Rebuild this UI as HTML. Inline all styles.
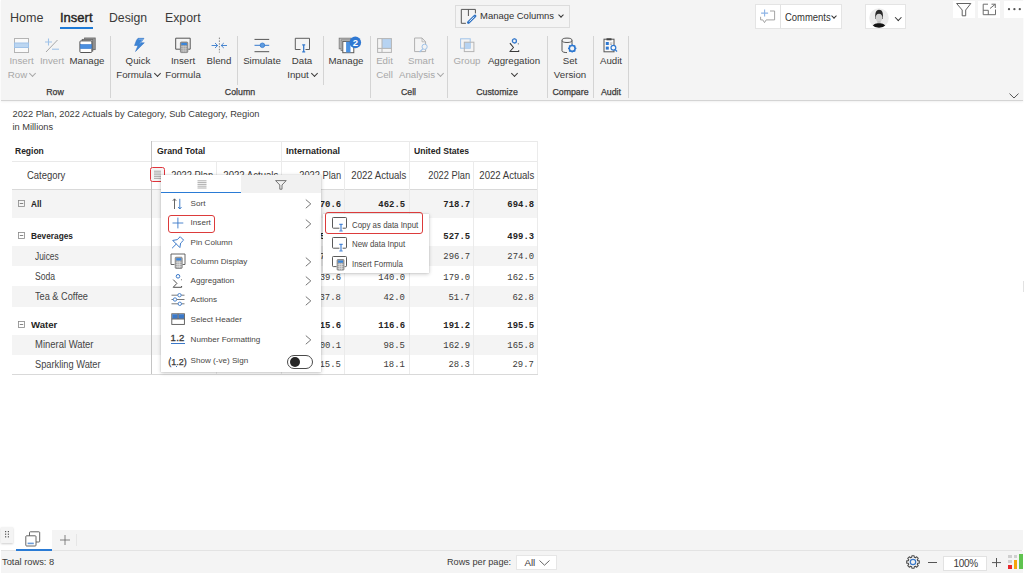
<!DOCTYPE html>
<html><head><meta charset="utf-8">
<style>
*{box-sizing:border-box;margin:0;padding:0}
html,body{width:1024px;height:573px;overflow:hidden;background:#fff;font-family:"Liberation Sans",sans-serif;color:#323130;position:relative}
.a{position:absolute}
.rib{left:1px;top:0;width:1022px;height:101px;background:#f4f4f4;border-bottom:1px solid #d4d4d4;box-shadow:0 1px 2px rgba(0,0,0,0.06)}
.tab{top:9.5px;font-size:13px;color:#3b3a39;white-space:nowrap}
.sb{-webkit-text-stroke:0.4px currentColor}
.sep{width:1px;background:#d4d4d4}
.lbl{font-size:9.7px;color:#3b3a39;white-space:nowrap;text-align:center;line-height:14.4px}
.dis{color:#a8a8a8}
.glb{font-size:8.8px;-webkit-text-stroke:0.25px #3b3a39;color:#3b3a39;white-space:nowrap;text-align:center;top:86.8px}
svg{display:block;overflow:visible}
.tt{font-size:9.3px;color:#323130;white-space:nowrap}
.cell{font-size:9.4px;white-space:nowrap}
.num{font-family:"Liberation Mono",monospace;font-size:8.6px;text-align:right;white-space:nowrap}
.mi{font-size:8px;color:#3b3a39;white-space:nowrap}
.chev{display:inline-block;width:5px;height:5px;border-right:1px solid currentColor;border-bottom:1px solid currentColor;transform:rotate(45deg);margin-left:3px;vertical-align:2px}
</style></head><body>

<div class="a rib"></div>
<!-- tabs -->
<div class="a tab" style="left:10px"><span style="display:inline-block;transform:scaleX(0.965);transform-origin:left">Home</span></div>
<div class="a tab sb" style="left:60px;color:#252423">Insert</div>
<div class="a" style="left:60px;top:27px;width:33px;height:2px;background:#1e7ad6"></div>
<div class="a tab" style="left:109px"><span style="display:inline-block;transform:scaleX(0.941);transform-origin:left">Design</span></div>
<div class="a tab" style="left:165px"><span style="display:inline-block;transform:scaleX(0.947);transform-origin:left">Export</span></div>

<!-- ribbon separators -->
<div class="a sep" style="left:110px;top:36px;height:62px"></div>
<div class="a sep" style="left:237px;top:36px;height:49px"></div>
<div class="a sep" style="left:323px;top:36px;height:49px"></div>
<div class="a sep" style="left:370px;top:36px;height:62px"></div>
<div class="a sep" style="left:447px;top:36px;height:62px"></div>
<div class="a sep" style="left:547px;top:36px;height:62px"></div>
<div class="a sep" style="left:593px;top:36px;height:62px"></div>
<div class="a sep" style="left:628px;top:36px;height:62px"></div>

<!-- icons -->
<svg class="a" style="left:14px;top:38px" width="15" height="15" viewBox="0 0 15 15">
 <rect x="0.5" y="0.5" width="14" height="14" fill="#fafafa" stroke="#b4b4b4"/>
 <rect x="0.5" y="5" width="14" height="4.5" fill="#bcd6f1" stroke="#9fc2e8"/>
</svg>
<svg class="a" style="left:44px;top:38px" width="16" height="16" viewBox="0 0 16 16">
 <path d="M1 4H8M4.5 0.5V7.5" stroke="#9fc2e8" stroke-width="1.1" fill="none"/>
 <path d="M2 14L13.5 2" stroke="#a6a6a6" stroke-width="1" fill="none"/>
 <path d="M8 11.2H15" stroke="#9fc2e8" stroke-width="1.1" fill="none"/>
</svg>
<svg class="a" style="left:79px;top:37px" width="17" height="17" viewBox="0 0 17 17">
 <rect x="5.6" y="1" width="10.6" height="11.6" fill="#9c9c9c" stroke="#6a6a6a" stroke-width="0.9"/>
 <rect x="3.2" y="2.4" width="10.6" height="11.6" fill="#b8b8b8" stroke="#6a6a6a" stroke-width="0.9"/>
 <rect x="0.9" y="3.9" width="12" height="11.6" rx="1" fill="#fff" stroke="#555" stroke-width="1"/>
 <rect x="1.4" y="7.6" width="11" height="3.9" fill="#4a8fe0" stroke="#2f72c8" stroke-width="0.6"/>
</svg>
<svg class="a" style="left:133px;top:38px" width="12" height="14" viewBox="0 0 12 14">
 <path d="M5 0.3H11L7.8 4.8H11.3L2.5 13.5L5 7.5H1.5L3.5 2.2Z" fill="#3d85d6" stroke="#2a6cc0" stroke-width="0.5"/>
 <path d="M5.6 1.3H9.6L7 5.6" fill="none" stroke="#9ec4ee" stroke-width="0.6"/>
</svg>
<svg class="a" style="left:175px;top:37px" width="16" height="16" viewBox="0 0 16 16">
 <path d="M5 12.2H0.7V1.2H15.2V12.2H13.2" fill="none" stroke="#555" stroke-width="1"/>
 <rect x="5.4" y="5" width="7.4" height="10.6" rx="1" fill="#9a9a9a" stroke="#6e6e6e" stroke-width="0.7"/>
 <rect x="6.3" y="5.9" width="5.6" height="2.2" fill="#3a86dc"/>
 <path d="M6 9.7H12.2M6 11.8H12.2M6 13.9H12.2M8.2 8.5V15.3M10.2 8.5V15.3" stroke="#d8d8d8" stroke-width="0.6"/>
</svg>
<svg class="a" style="left:211px;top:37px" width="16" height="16" viewBox="0 0 16 16">
 <path d="M8.4 0.6V15.6" stroke="#777" stroke-width="0.9" stroke-dasharray="1.5 1.3"/>
 <path d="M0.6 8.5H6.6M4 6L6.6 8.5L4 11M16 8.5H10.2M12.8 6L10.2 8.5L12.8 11" stroke="#3579cc" stroke-width="0.9" fill="none"/>
</svg>
<svg class="a" style="left:254px;top:38px" width="16" height="15" viewBox="0 0 16 15">
 <path d="M0.5 1.4H15.2M0.5 13.7H15.2" stroke="#555" stroke-width="1"/>
 <path d="M0.5 7.3H15.2" stroke="#3579cc" stroke-width="1"/>
 <circle cx="8.4" cy="7.3" r="2.3" fill="#5d9be0" stroke="#3579cc" stroke-width="0.8"/>
</svg>
<svg class="a" style="left:294px;top:37px" width="17" height="17" viewBox="0 0 17 17">
 <path d="M6.5 12.5H1.3V1.3H15.5V12.5H11.5" fill="none" stroke="#555" stroke-width="0.95"/>
 <path d="M9.7 7.6V14.8M8.2 7.8H11.2M8.2 14.8H11.2" stroke="#3579cc" stroke-width="1.3" fill="none"/>
</svg>
<svg class="a" style="left:338px;top:37px" width="24" height="17" viewBox="0 0 24 17">
 <rect x="1.2" y="1.2" width="12" height="10.6" fill="#cfcfcf" stroke="#7a7a7a" stroke-width="0.9"/>
 <rect x="3.1" y="2.9" width="12" height="10.6" fill="#d8d8d8" stroke="#7a7a7a" stroke-width="0.9"/>
 <rect x="4.8" y="4.4" width="11" height="11.3" fill="#fff" stroke="#5a5a5a" stroke-width="1"/>
 <rect x="8.1" y="4.8" width="4.4" height="10.6" fill="#4b92e2"/>
 <circle cx="17.3" cy="5.4" r="5.8" fill="#2f78d2"/>
 <text x="17.4" y="9.1" font-size="9.6" font-weight="bold" fill="#fff" text-anchor="middle" font-family="Liberation Sans">2</text>
</svg>
<svg class="a" style="left:377px;top:38px" width="15" height="15" viewBox="0 0 15 15">
 <rect x="5" y="0.6" width="9.4" height="9.8" fill="#b6d3f2"/>
 <rect x="0.6" y="0.6" width="13.8" height="13.8" fill="none" stroke="#b4b4b4" stroke-width="1"/>
 <path d="M5 0.6V14.4M0.6 10.4H14.4" stroke="#b4b4b4" stroke-width="1"/>
</svg>
<svg class="a" style="left:414px;top:37px" width="14" height="16" viewBox="0 0 14 16">
 <path d="M0.6 1H8L11.6 4.8V14.6H0.6Z" fill="none" stroke="#b0b0b0" stroke-width="1"/>
 <path d="M8 1V4.8H11.6" fill="none" stroke="#b0b0b0" stroke-width="0.8"/>
 <circle cx="10.6" cy="9.8" r="2.6" fill="#f3f3f3" stroke="#9fc2e8" stroke-width="1"/>
 <path d="M8.8 11.8L5.6 15" stroke="#9fc2e8" stroke-width="1.1"/>
</svg>
<svg class="a" style="left:460px;top:38px" width="15" height="15" viewBox="0 0 15 15">
 <rect x="0.6" y="0.8" width="9.6" height="9.4" fill="none" stroke="#9fc2e8" stroke-width="1"/>
 <rect x="4.3" y="4.2" width="5.9" height="6" fill="#b6d3f2"/>
 <rect x="4.3" y="4.2" width="9.6" height="9.4" fill="none" stroke="#b4b4b4" stroke-width="1"/>
</svg>
<svg class="a" style="left:508px;top:37px" width="13" height="17" viewBox="0 0 13 17">
 <circle cx="6.4" cy="3.9" r="2" fill="none" stroke="#3579cc" stroke-width="1.3"/>
 <path d="M6.4 1V1.6M6.4 6.2V6.8" stroke="#3579cc" stroke-width="0.8"/>
 <path d="M1.9 6.2L5.5 10.5L1.9 14.5H10.7V13.2" fill="none" stroke="#3a3a3a" stroke-width="1.1" stroke-linejoin="round"/>
 <circle cx="10.3" cy="6.8" r="0.6" fill="#555"/>
</svg>
<svg class="a" style="left:561px;top:37px" width="16" height="17" viewBox="0 0 16 17">
 <path d="M1 3.5V13.8C1 15 3.5 15.6 6 15.6" fill="none" stroke="#555" stroke-width="1"/>
 <path d="M11 3.5V7.5" fill="none" stroke="#555" stroke-width="1"/>
 <ellipse cx="6" cy="3.3" rx="5" ry="2.2" fill="none" stroke="#555" stroke-width="1"/>
 <circle cx="11.2" cy="11.4" r="2.9" fill="none" stroke="#2e78d0" stroke-width="1.6"/>
 <path d="M11.2 7.2V8.4M11.2 14.4V15.6M7 11.4H8.2M14.2 11.4H15.4M8.2 8.4L9 9.2M13.4 13.6L14.2 14.4M14.2 8.4L13.4 9.2M9 13.6L8.2 14.4" stroke="#2e78d0" stroke-width="1.4"/>
</svg>
<svg class="a" style="left:603px;top:38px" width="15" height="15" viewBox="0 0 15 15">
 <rect x="1" y="1.2" width="10" height="12.6" fill="#fafafa" stroke="#555" stroke-width="1"/>
 <rect x="3.5" y="0.3" width="5" height="2" fill="#444"/>
 <rect x="2.8" y="4" width="3" height="3" fill="#2e78d0"/>
 <rect x="2.8" y="8.6" width="3" height="3" fill="#2e78d0"/>
 <path d="M6.8 5H9.5M6.8 6.4H9" stroke="#888" stroke-width="0.6"/>
 <circle cx="10.4" cy="9.8" r="2.4" fill="#fafafa" stroke="#2e78d0" stroke-width="1.2"/>
 <path d="M12.2 11.6L14 13.5" stroke="#2e78d0" stroke-width="1.3"/>
</svg>

<!-- labels -->
<div class="a lbl dis" style="left:0;width:43px;top:54px">Insert<br>Row<span class="chev"></span></div>
<div class="a lbl dis" style="left:37px;width:30px;top:54px">Invert</div>
<div class="a lbl" style="left:67px;width:40px;top:54px">Manage</div>
<div class="a lbl" style="left:115px;width:46px;top:54px">Quick<br>Formula<span class="chev"></span></div>
<div class="a lbl" style="left:161px;width:44px;top:54px">Insert<br>Formula</div>
<div class="a lbl" style="left:202px;width:34px;top:54px">Blend</div>
<div class="a lbl" style="left:239px;width:46px;top:54px">Simulate</div>
<div class="a lbl" style="left:284px;width:36px;top:54px">Data<br>Input<span class="chev"></span></div>
<div class="a lbl" style="left:326px;width:40px;top:54px">Manage</div>
<div class="a lbl dis" style="left:372px;width:25px;top:54px">Edit<br>Cell</div>
<div class="a lbl dis" style="left:397px;width:48px;top:54px">Smart<br>Analysis<span class="chev"></span></div>
<div class="a lbl dis" style="left:450px;width:34px;top:54px">Group</div>
<div class="a lbl" style="left:484px;width:60px;top:54px">Aggregation<br><span class="chev" style="margin-left:0"></span></div>
<div class="a lbl" style="left:548px;width:44px;top:54px">Set<br>Version</div>
<div class="a lbl" style="left:595px;width:32px;top:54px">Audit</div>

<div class="a glb" style="left:0;width:110px">Row</div>
<div class="a glb" style="left:110px;width:260px">Column</div>
<div class="a glb" style="left:370px;width:77px">Cell</div>
<div class="a glb" style="left:447px;width:100px">Customize</div>
<div class="a glb" style="left:547px;width:47px">Compare</div>
<div class="a glb" style="left:594px;width:34px">Audit</div>

<!-- top widgets -->
<div class="a" style="left:455px;top:5px;width:114.5px;height:22.5px;border:1px solid #dcdcdc;background:#f4f4f4"></div>
<svg class="a" style="left:460px;top:8px" width="17" height="17" viewBox="0 0 17 17">
 <path d="M1.3 15.3V1.4H15.4V5.4M8.4 1.4V8M1.3 15.3H5.9" fill="none" stroke="#555" stroke-width="1"/>
 <path d="M8.4 14.5L15 7.9" stroke="#2e72c4" stroke-width="2.8" stroke-linecap="round"/>
 <path d="M9.2 13.7L14.2 8.7" stroke="#fff" stroke-width="0.9"/>
</svg>
<div class="a tt" style="left:479.6px;top:10.3px;font-size:9.8px;color:#323130"><span style="display:inline-block;transform:scaleX(0.965);transform-origin:left">Manage Columns</span></div>
<span class="a chev" style="left:558.5px;top:13px;width:4px;height:4px;border-width:0 1.3px 1.3px 0;color:#333;margin:0"></span>

<div class="a" style="left:755px;top:4px;width:87px;height:25px;border:1px solid #e4e4e4;background:#fff"></div>
<div class="a" style="left:779.5px;top:5px;width:1px;height:23px;background:#e2e2e2"></div>
<svg class="a" style="left:759px;top:8px" width="18" height="17" viewBox="0 0 18 17">
 <path d="M11 3H15.6V11.9H7.2L5.5 14.6L3.8 11.9H1.6V8.8" fill="none" stroke="#9a9a9a" stroke-width="0.9" stroke-linejoin="round"/>
 <path d="M5.6 1.5V8.6M2.1 5.1H9.1" stroke="#8db4e6" stroke-width="1.1"/>
</svg>
<div class="a tt" style="left:784.5px;top:10.8px;font-size:10.5px;line-height:12px"><span style="display:inline-block;transform:scaleX(0.9);transform-origin:left">Comments</span></div>
<span class="a chev" style="left:831.5px;top:14px;width:4px;height:4px;border-width:0 1.3px 1.3px 0;color:#333;margin:0"></span>

<div class="a" style="left:865px;top:4px;width:41px;height:25px;border:1px solid #e4e4e4;background:#fff"></div>
<svg class="a" style="left:869px;top:8px" width="20" height="20" viewBox="0 0 20 20">
 <defs><clipPath id="cav"><circle cx="10" cy="10" r="9.8"/></clipPath></defs>
 <circle cx="10" cy="10" r="9.8" fill="#ececec"/>
 <g clip-path="url(#cav)">
  <path d="M6.5 11C5.6 6 6.8 1.8 10 1.8S14.6 5 13.6 11Z" fill="#2a2a2a"/>
  <ellipse cx="10" cy="9.6" rx="3.3" ry="4.4" fill="#d2d2d2"/>
  <path d="M6.8 8C7.4 4.6 8.6 4 10.2 4S12.8 4.6 13.3 8C12.4 6.4 11.4 5.8 10 5.8S7.6 6.4 6.8 8Z" fill="#2a2a2a"/>
  <path d="M8.4 13H11.6V15.6H8.4Z" fill="#c4c4c4"/>
  <path d="M2.5 21C3 16.6 6 15.2 10 15.2S17 16.6 17.5 21Z" fill="#141414"/>
 </g>
</svg>
<span class="a chev" style="left:895.5px;top:15px;width:4.5px;height:4.5px;border-width:0 1.3px 1.3px 0;color:#333;margin:0"></span>

<div class="a" style="left:953px;top:1px;width:22px;height:17px;background:#fff"></div>
<svg class="a" style="left:955px;top:2px" width="18" height="16" viewBox="0 0 18 16">
 <path d="M1.6 1.5H15.8L10.7 8V13.8H7.2V8Z" fill="none" stroke="#5a5a5a" stroke-width="0.95" stroke-linejoin="round"/>
</svg>
<div class="a" style="left:978.2px;top:1px;width:21.6px;height:17px;background:#fff"></div>
<svg class="a" style="left:981px;top:2px" width="17" height="15" viewBox="0 0 17 15">
 <path d="M7 2.2H2.2V12.7H14.5V7.5" fill="none" stroke="#666" stroke-width="0.95"/>
 <path d="M2.2 8.3H7.3V12.7" fill="none" stroke="#666" stroke-width="0.95"/>
 <path d="M9 6.5L14.3 2.2M10.5 2.2H14.3V6" fill="none" stroke="#666" stroke-width="0.95"/>
</svg>
<div class="a" style="left:1004px;top:1px;width:20px;height:17px;background:#fff"></div>
<svg class="a" style="left:1005px;top:6.5px" width="19" height="4" viewBox="0 0 19 4">
 <circle cx="4" cy="2.2" r="1.15" fill="#555"/><circle cx="9.4" cy="2.2" r="1.15" fill="#555"/><circle cx="14.8" cy="2.2" r="1.15" fill="#555"/>
</svg>
<svg class="a" style="left:1008.8px;top:93px" width="11" height="6" viewBox="0 0 11 6">
 <path d="M0.5 0.6L5 5L9.5 0.6" fill="none" stroke="#555" stroke-width="1"/>
</svg>



<div class="a t" style="top:109.77px;font-size:9.25px;line-height:9.25px;color:#3b3a39;font-family:'Liberation Sans',sans-serif;left:12.5px;">2022 Plan, 2022 Actuals by Category, Sub Category, Region</div>
<div class="a t" style="top:122.77px;font-size:9.25px;line-height:9.25px;color:#3b3a39;font-family:'Liberation Sans',sans-serif;left:12.5px;">in Millions</div>
<div class="a" style="left:12px;top:141.5px;width:525.5px;height:232px;background:#fff"></div>
<div class="a" style="left:12px;top:189.5px;width:525.5px;height:28.0px;background:#f4f4f4"></div>
<div class="a" style="left:12px;top:217.5px;width:525.5px;height:28.5px;background:#ffffff"></div>
<div class="a" style="left:12px;top:246px;width:525.5px;height:20px;background:#f4f4f4"></div>
<div class="a" style="left:12px;top:266px;width:525.5px;height:20px;background:#ffffff"></div>
<div class="a" style="left:12px;top:286px;width:525.5px;height:20.5px;background:#f4f4f4"></div>
<div class="a" style="left:12px;top:306.5px;width:525.5px;height:28.5px;background:#ffffff"></div>
<div class="a" style="left:12px;top:335px;width:525.5px;height:20px;background:#f4f4f4"></div>
<div class="a" style="left:12px;top:355px;width:525.5px;height:18.5px;background:#ffffff"></div>
<div class="a" style="left:12px;top:161px;width:525.5px;height:1px;background:#e9e9e9"></div>
<div class="a" style="left:12px;top:188.5px;width:525.5px;height:1.5px;background:#d9d9d9"></div>
<div class="a" style="left:152px;top:141px;width:385.5px;height:1px;background:#e9e9e9"></div>
<div class="a" style="left:12px;top:373.5px;width:525.5px;height:1px;background:#d9d9d9"></div>
<div class="a" style="left:151px;top:141px;width:1px;height:233px;background:#c4c4c4"></div>
<div class="a" style="left:280.5px;top:141px;width:1px;height:233px;background:#ebebeb"></div>
<div class="a" style="left:408.5px;top:141px;width:1px;height:233px;background:#ebebeb"></div>
<div class="a" style="left:216.0px;top:161px;width:1px;height:213px;background:#ebebeb"></div>
<div class="a" style="left:344.0px;top:161px;width:1px;height:213px;background:#ebebeb"></div>
<div class="a" style="left:472.9px;top:161px;width:1px;height:213px;background:#ebebeb"></div>
<div class="a" style="left:536.9px;top:141px;width:1px;height:233px;background:#ebebeb"></div>
<div class="a t" style="top:147.40px;font-size:9.1px;line-height:9.1px;color:#252423;font-family:'Liberation Sans',sans-serif;font-weight:bold;left:15.3px;"><span style="display:inline-block;transform:scaleX(0.934);transform-origin:left">Region</span></div>
<div class="a t" style="top:147.40px;font-size:9.1px;line-height:9.1px;color:#252423;font-family:'Liberation Sans',sans-serif;font-weight:bold;left:156.8px;"><span style="display:inline-block;transform:scaleX(0.958);transform-origin:left">Grand Total</span></div>
<div class="a t" style="top:147.40px;font-size:9.1px;line-height:9.1px;color:#252423;font-family:'Liberation Sans',sans-serif;font-weight:bold;left:285.7px;"><span style="display:inline-block;transform:scaleX(0.990);transform-origin:left">International</span></div>
<div class="a t" style="top:147.40px;font-size:9.1px;line-height:9.1px;color:#252423;font-family:'Liberation Sans',sans-serif;font-weight:bold;left:414.2px;"><span style="display:inline-block;transform:scaleX(0.946);transform-origin:left">United States</span></div>
<div class="a t" style="top:171.03px;font-size:10px;line-height:10px;color:#3b3a39;font-family:'Liberation Sans',sans-serif;left:27px;"><span style="display:inline-block;transform:scaleX(0.944);transform-origin:left">Category</span></div>
<div class="a t" style="top:171.03px;font-size:10px;line-height:10px;color:#3b3a39;font-family:'Liberation Sans',sans-serif;left:143.5px;width:70px;text-align:right;"><span style="display:inline-block;transform:scaleX(0.928);transform-origin:right">2022 Plan</span></div>
<div class="a t" style="top:171.03px;font-size:10px;line-height:10px;color:#3b3a39;font-family:'Liberation Sans',sans-serif;left:208px;width:70px;text-align:right;"><span style="display:inline-block;transform:scaleX(0.960);transform-origin:right">2022 Actuals</span></div>
<div class="a t" style="top:171.03px;font-size:10px;line-height:10px;color:#3b3a39;font-family:'Liberation Sans',sans-serif;left:271.5px;width:70px;text-align:right;"><span style="display:inline-block;transform:scaleX(0.928);transform-origin:right">2022 Plan</span></div>
<div class="a t" style="top:171.03px;font-size:10px;line-height:10px;color:#3b3a39;font-family:'Liberation Sans',sans-serif;left:336px;width:70px;text-align:right;"><span style="display:inline-block;transform:scaleX(0.960);transform-origin:right">2022 Actuals</span></div>
<div class="a t" style="top:171.03px;font-size:10px;line-height:10px;color:#3b3a39;font-family:'Liberation Sans',sans-serif;left:400.4px;width:70px;text-align:right;"><span style="display:inline-block;transform:scaleX(0.928);transform-origin:right">2022 Plan</span></div>
<div class="a t" style="top:171.03px;font-size:10px;line-height:10px;color:#3b3a39;font-family:'Liberation Sans',sans-serif;left:464.4px;width:70px;text-align:right;"><span style="display:inline-block;transform:scaleX(0.960);transform-origin:right">2022 Actuals</span></div>
<svg class="a" style="left:18.2px;top:200.0px" width="7" height="7" viewBox="0 0 7 7"><rect x="0.5" y="0.5" width="6" height="6" fill="none" stroke="#888" stroke-width="0.8"/><path d="M1.8 3.5H5.2" stroke="#666" stroke-width="0.8"/></svg>
<div class="a t" style="top:200.18px;font-size:9.0px;line-height:9.0px;color:#252423;font-family:'Liberation Sans',sans-serif;font-weight:bold;left:30.5px;"><span style="display:inline-block;transform:scaleX(0.913);transform-origin:left">All</span></div>
<div class="a t" style="top:201.13px;font-size:8.7px;line-height:8.7px;color:#252423;font-family:'Liberation Mono',monospace;font-weight:bold;left:152.7px;width:60px;text-align:right;"><span style="display:inline-block;transform:scaleX(1.025);transform-origin:right">1189.3</span></div>
<div class="a t" style="top:201.13px;font-size:8.7px;line-height:8.7px;color:#252423;font-family:'Liberation Mono',monospace;font-weight:bold;left:217.2px;width:60px;text-align:right;"><span style="display:inline-block;transform:scaleX(1.025);transform-origin:right">1157.3</span></div>
<div class="a t" style="top:201.13px;font-size:8.7px;line-height:8.7px;color:#252423;font-family:'Liberation Mono',monospace;font-weight:bold;left:280.7px;width:60px;text-align:right;"><span style="display:inline-block;transform:scaleX(1.025);transform-origin:right">470.6</span></div>
<div class="a t" style="top:201.13px;font-size:8.7px;line-height:8.7px;color:#252423;font-family:'Liberation Mono',monospace;font-weight:bold;left:345.2px;width:60px;text-align:right;"><span style="display:inline-block;transform:scaleX(1.025);transform-origin:right">462.5</span></div>
<div class="a t" style="top:201.13px;font-size:8.7px;line-height:8.7px;color:#252423;font-family:'Liberation Mono',monospace;font-weight:bold;left:409.59999999999997px;width:60px;text-align:right;"><span style="display:inline-block;transform:scaleX(1.025);transform-origin:right">718.7</span></div>
<div class="a t" style="top:201.13px;font-size:8.7px;line-height:8.7px;color:#252423;font-family:'Liberation Mono',monospace;font-weight:bold;left:473.6px;width:60px;text-align:right;"><span style="display:inline-block;transform:scaleX(1.025);transform-origin:right">694.8</span></div>
<svg class="a" style="left:18.2px;top:232.3px" width="7" height="7" viewBox="0 0 7 7"><rect x="0.5" y="0.5" width="6" height="6" fill="none" stroke="#888" stroke-width="0.8"/><path d="M1.8 3.5H5.2" stroke="#666" stroke-width="0.8"/></svg>
<div class="a t" style="top:232.48px;font-size:9.0px;line-height:9.0px;color:#252423;font-family:'Liberation Sans',sans-serif;font-weight:bold;left:30.5px;"><span style="display:inline-block;transform:scaleX(0.921);transform-origin:left">Beverages</span></div>
<div class="a t" style="top:233.43px;font-size:8.7px;line-height:8.7px;color:#252423;font-family:'Liberation Mono',monospace;font-weight:bold;left:152.7px;width:60px;text-align:right;"><span style="display:inline-block;transform:scaleX(1.025);transform-origin:right">882.5</span></div>
<div class="a t" style="top:233.43px;font-size:8.7px;line-height:8.7px;color:#252423;font-family:'Liberation Mono',monospace;font-weight:bold;left:217.2px;width:60px;text-align:right;"><span style="display:inline-block;transform:scaleX(1.025);transform-origin:right">845.2</span></div>
<div class="a t" style="top:233.43px;font-size:8.7px;line-height:8.7px;color:#252423;font-family:'Liberation Mono',monospace;font-weight:bold;left:280.7px;width:60px;text-align:right;"><span style="display:inline-block;transform:scaleX(1.025);transform-origin:right">355.0</span></div>
<div class="a t" style="top:233.43px;font-size:8.7px;line-height:8.7px;color:#252423;font-family:'Liberation Mono',monospace;font-weight:bold;left:345.2px;width:60px;text-align:right;"><span style="display:inline-block;transform:scaleX(1.025);transform-origin:right">345.9</span></div>
<div class="a t" style="top:233.43px;font-size:8.7px;line-height:8.7px;color:#252423;font-family:'Liberation Mono',monospace;font-weight:bold;left:409.59999999999997px;width:60px;text-align:right;"><span style="display:inline-block;transform:scaleX(1.025);transform-origin:right">527.5</span></div>
<div class="a t" style="top:233.43px;font-size:8.7px;line-height:8.7px;color:#252423;font-family:'Liberation Mono',monospace;font-weight:bold;left:473.6px;width:60px;text-align:right;"><span style="display:inline-block;transform:scaleX(1.025);transform-origin:right">499.3</span></div>
<div class="a t" style="top:251.64px;font-size:10px;line-height:10px;color:#444444;font-family:'Liberation Sans',sans-serif;left:34.7px;"><span style="display:inline-block;transform:scaleX(0.836);transform-origin:left">Juices</span></div>
<div class="a t" style="top:253.43px;font-size:8.7px;line-height:8.7px;color:#3b3a39;font-family:'Liberation Mono',monospace;left:152.7px;width:60px;text-align:right;"><span style="display:inline-block;transform:scaleX(1.025);transform-origin:right">474.3</span></div>
<div class="a t" style="top:253.43px;font-size:8.7px;line-height:8.7px;color:#3b3a39;font-family:'Liberation Mono',monospace;left:217.2px;width:60px;text-align:right;"><span style="display:inline-block;transform:scaleX(1.025);transform-origin:right">437.9</span></div>
<div class="a t" style="top:253.43px;font-size:8.7px;line-height:8.7px;color:#3b3a39;font-family:'Liberation Mono',monospace;left:280.7px;width:60px;text-align:right;"><span style="display:inline-block;transform:scaleX(1.025);transform-origin:right">177.6</span></div>
<div class="a t" style="top:253.43px;font-size:8.7px;line-height:8.7px;color:#3b3a39;font-family:'Liberation Mono',monospace;left:345.2px;width:60px;text-align:right;"><span style="display:inline-block;transform:scaleX(1.025);transform-origin:right">163.9</span></div>
<div class="a t" style="top:253.43px;font-size:8.7px;line-height:8.7px;color:#3b3a39;font-family:'Liberation Mono',monospace;left:409.59999999999997px;width:60px;text-align:right;"><span style="display:inline-block;transform:scaleX(1.025);transform-origin:right">296.7</span></div>
<div class="a t" style="top:253.43px;font-size:8.7px;line-height:8.7px;color:#3b3a39;font-family:'Liberation Mono',monospace;left:473.6px;width:60px;text-align:right;"><span style="display:inline-block;transform:scaleX(1.025);transform-origin:right">274.0</span></div>
<div class="a t" style="top:271.74px;font-size:10px;line-height:10px;color:#444444;font-family:'Liberation Sans',sans-serif;left:34.7px;"><span style="display:inline-block;transform:scaleX(0.860);transform-origin:left">Soda</span></div>
<div class="a t" style="top:273.53px;font-size:8.7px;line-height:8.7px;color:#3b3a39;font-family:'Liberation Mono',monospace;left:152.7px;width:60px;text-align:right;"><span style="display:inline-block;transform:scaleX(1.025);transform-origin:right">318.6</span></div>
<div class="a t" style="top:273.53px;font-size:8.7px;line-height:8.7px;color:#3b3a39;font-family:'Liberation Mono',monospace;left:217.2px;width:60px;text-align:right;"><span style="display:inline-block;transform:scaleX(1.025);transform-origin:right">302.5</span></div>
<div class="a t" style="top:273.53px;font-size:8.7px;line-height:8.7px;color:#3b3a39;font-family:'Liberation Mono',monospace;left:280.7px;width:60px;text-align:right;"><span style="display:inline-block;transform:scaleX(1.025);transform-origin:right">139.6</span></div>
<div class="a t" style="top:273.53px;font-size:8.7px;line-height:8.7px;color:#3b3a39;font-family:'Liberation Mono',monospace;left:345.2px;width:60px;text-align:right;"><span style="display:inline-block;transform:scaleX(1.025);transform-origin:right">140.0</span></div>
<div class="a t" style="top:273.53px;font-size:8.7px;line-height:8.7px;color:#3b3a39;font-family:'Liberation Mono',monospace;left:409.59999999999997px;width:60px;text-align:right;"><span style="display:inline-block;transform:scaleX(1.025);transform-origin:right">179.0</span></div>
<div class="a t" style="top:273.53px;font-size:8.7px;line-height:8.7px;color:#3b3a39;font-family:'Liberation Mono',monospace;left:473.6px;width:60px;text-align:right;"><span style="display:inline-block;transform:scaleX(1.025);transform-origin:right">162.5</span></div>
<div class="a t" style="top:291.94px;font-size:10px;line-height:10px;color:#444444;font-family:'Liberation Sans',sans-serif;left:34.7px;"><span style="display:inline-block;transform:scaleX(0.919);transform-origin:left">Tea &amp; Coffee</span></div>
<div class="a t" style="top:293.73px;font-size:8.7px;line-height:8.7px;color:#3b3a39;font-family:'Liberation Mono',monospace;left:152.7px;width:60px;text-align:right;"><span style="display:inline-block;transform:scaleX(1.025);transform-origin:right">89.5</span></div>
<div class="a t" style="top:293.73px;font-size:8.7px;line-height:8.7px;color:#3b3a39;font-family:'Liberation Mono',monospace;left:217.2px;width:60px;text-align:right;"><span style="display:inline-block;transform:scaleX(1.025);transform-origin:right">104.8</span></div>
<div class="a t" style="top:293.73px;font-size:8.7px;line-height:8.7px;color:#3b3a39;font-family:'Liberation Mono',monospace;left:280.7px;width:60px;text-align:right;"><span style="display:inline-block;transform:scaleX(1.025);transform-origin:right">37.8</span></div>
<div class="a t" style="top:293.73px;font-size:8.7px;line-height:8.7px;color:#3b3a39;font-family:'Liberation Mono',monospace;left:345.2px;width:60px;text-align:right;"><span style="display:inline-block;transform:scaleX(1.025);transform-origin:right">42.0</span></div>
<div class="a t" style="top:293.73px;font-size:8.7px;line-height:8.7px;color:#3b3a39;font-family:'Liberation Mono',monospace;left:409.59999999999997px;width:60px;text-align:right;"><span style="display:inline-block;transform:scaleX(1.025);transform-origin:right">51.7</span></div>
<div class="a t" style="top:293.73px;font-size:8.7px;line-height:8.7px;color:#3b3a39;font-family:'Liberation Mono',monospace;left:473.6px;width:60px;text-align:right;"><span style="display:inline-block;transform:scaleX(1.025);transform-origin:right">62.8</span></div>
<svg class="a" style="left:18.2px;top:320.90000000000003px" width="7" height="7" viewBox="0 0 7 7"><rect x="0.5" y="0.5" width="6" height="6" fill="none" stroke="#888" stroke-width="0.8"/><path d="M1.8 3.5H5.2" stroke="#666" stroke-width="0.8"/></svg>
<div class="a t" style="top:321.08px;font-size:9.0px;line-height:9.0px;color:#252423;font-family:'Liberation Sans',sans-serif;font-weight:bold;left:30.5px;"><span style="display:inline-block;transform:scaleX(1.066);transform-origin:left">Water</span></div>
<div class="a t" style="top:322.03px;font-size:8.7px;line-height:8.7px;color:#252423;font-family:'Liberation Mono',monospace;font-weight:bold;left:152.7px;width:60px;text-align:right;"><span style="display:inline-block;transform:scaleX(1.025);transform-origin:right">306.8</span></div>
<div class="a t" style="top:322.03px;font-size:8.7px;line-height:8.7px;color:#252423;font-family:'Liberation Mono',monospace;font-weight:bold;left:217.2px;width:60px;text-align:right;"><span style="display:inline-block;transform:scaleX(1.025);transform-origin:right">312.1</span></div>
<div class="a t" style="top:322.03px;font-size:8.7px;line-height:8.7px;color:#252423;font-family:'Liberation Mono',monospace;font-weight:bold;left:280.7px;width:60px;text-align:right;"><span style="display:inline-block;transform:scaleX(1.025);transform-origin:right">115.6</span></div>
<div class="a t" style="top:322.03px;font-size:8.7px;line-height:8.7px;color:#252423;font-family:'Liberation Mono',monospace;font-weight:bold;left:345.2px;width:60px;text-align:right;"><span style="display:inline-block;transform:scaleX(1.025);transform-origin:right">116.6</span></div>
<div class="a t" style="top:322.03px;font-size:8.7px;line-height:8.7px;color:#252423;font-family:'Liberation Mono',monospace;font-weight:bold;left:409.59999999999997px;width:60px;text-align:right;"><span style="display:inline-block;transform:scaleX(1.025);transform-origin:right">191.2</span></div>
<div class="a t" style="top:322.03px;font-size:8.7px;line-height:8.7px;color:#252423;font-family:'Liberation Mono',monospace;font-weight:bold;left:473.6px;width:60px;text-align:right;"><span style="display:inline-block;transform:scaleX(1.025);transform-origin:right">195.5</span></div>
<div class="a t" style="top:340.14px;font-size:10px;line-height:10px;color:#444444;font-family:'Liberation Sans',sans-serif;left:34.7px;"><span style="display:inline-block;transform:scaleX(0.946);transform-origin:left">Mineral Water</span></div>
<div class="a t" style="top:341.93px;font-size:8.7px;line-height:8.7px;color:#3b3a39;font-family:'Liberation Mono',monospace;left:152.7px;width:60px;text-align:right;"><span style="display:inline-block;transform:scaleX(1.025);transform-origin:right">263.0</span></div>
<div class="a t" style="top:341.93px;font-size:8.7px;line-height:8.7px;color:#3b3a39;font-family:'Liberation Mono',monospace;left:217.2px;width:60px;text-align:right;"><span style="display:inline-block;transform:scaleX(1.025);transform-origin:right">264.3</span></div>
<div class="a t" style="top:341.93px;font-size:8.7px;line-height:8.7px;color:#3b3a39;font-family:'Liberation Mono',monospace;left:280.7px;width:60px;text-align:right;"><span style="display:inline-block;transform:scaleX(1.025);transform-origin:right">100.1</span></div>
<div class="a t" style="top:341.93px;font-size:8.7px;line-height:8.7px;color:#3b3a39;font-family:'Liberation Mono',monospace;left:345.2px;width:60px;text-align:right;"><span style="display:inline-block;transform:scaleX(1.025);transform-origin:right">98.5</span></div>
<div class="a t" style="top:341.93px;font-size:8.7px;line-height:8.7px;color:#3b3a39;font-family:'Liberation Mono',monospace;left:409.59999999999997px;width:60px;text-align:right;"><span style="display:inline-block;transform:scaleX(1.025);transform-origin:right">162.9</span></div>
<div class="a t" style="top:341.93px;font-size:8.7px;line-height:8.7px;color:#3b3a39;font-family:'Liberation Mono',monospace;left:473.6px;width:60px;text-align:right;"><span style="display:inline-block;transform:scaleX(1.025);transform-origin:right">165.8</span></div>
<div class="a t" style="top:359.64px;font-size:10px;line-height:10px;color:#444444;font-family:'Liberation Sans',sans-serif;left:34.7px;"><span style="display:inline-block;transform:scaleX(0.927);transform-origin:left">Sparkling Water</span></div>
<div class="a t" style="top:361.43px;font-size:8.7px;line-height:8.7px;color:#3b3a39;font-family:'Liberation Mono',monospace;left:152.7px;width:60px;text-align:right;"><span style="display:inline-block;transform:scaleX(1.025);transform-origin:right">43.8</span></div>
<div class="a t" style="top:361.43px;font-size:8.7px;line-height:8.7px;color:#3b3a39;font-family:'Liberation Mono',monospace;left:217.2px;width:60px;text-align:right;"><span style="display:inline-block;transform:scaleX(1.025);transform-origin:right">47.8</span></div>
<div class="a t" style="top:361.43px;font-size:8.7px;line-height:8.7px;color:#3b3a39;font-family:'Liberation Mono',monospace;left:280.7px;width:60px;text-align:right;"><span style="display:inline-block;transform:scaleX(1.025);transform-origin:right">15.5</span></div>
<div class="a t" style="top:361.43px;font-size:8.7px;line-height:8.7px;color:#3b3a39;font-family:'Liberation Mono',monospace;left:345.2px;width:60px;text-align:right;"><span style="display:inline-block;transform:scaleX(1.025);transform-origin:right">18.1</span></div>
<div class="a t" style="top:361.43px;font-size:8.7px;line-height:8.7px;color:#3b3a39;font-family:'Liberation Mono',monospace;left:409.59999999999997px;width:60px;text-align:right;"><span style="display:inline-block;transform:scaleX(1.025);transform-origin:right">28.3</span></div>
<div class="a t" style="top:361.43px;font-size:8.7px;line-height:8.7px;color:#3b3a39;font-family:'Liberation Mono',monospace;left:473.6px;width:60px;text-align:right;"><span style="display:inline-block;transform:scaleX(1.025);transform-origin:right">29.7</span></div>
<div class="a" style="left:150px;top:166.6px;width:15.2px;height:15.2px;border:1.4px solid #e0343c;border-radius:2.5px;background:#f4f4f4"></div>
<svg class="a" style="left:153px;top:169.5px" width="9" height="9" viewBox="0 0 9 9"><path d="M1 1.2H8M1 3H8M1 4.8H8M1 6.6H8M1 8.4H8" stroke="#777" stroke-width="0.6"/></svg>
<div class="a" style="left:160.8px;top:174.5px;width:160.2px;height:197.5px;background:#fff;box-shadow:0 1px 4px rgba(0,0,0,0.22),0 0 1px rgba(0,0,0,0.2)"></div>
<div class="a" style="left:241px;top:174.5px;width:80px;height:18.80000000000001px;background:#f1f1f1"></div>
<div class="a" style="left:160.8px;top:191.6px;width:80.19999999999999px;height:1.7px;background:#2a7bd5"></div>
<svg class="a" style="left:196.5px;top:180px" width="10" height="9" viewBox="0 0 10 9"><path d="M0.5 0.8H9.5M0.5 2.6H9.5M0.5 4.4H9.5M0.5 6.2H9.5M0.5 8H9.5" stroke="#6a6a6a" stroke-width="0.55"/></svg>
<svg class="a" style="left:275px;top:180px" width="12" height="10" viewBox="0 0 12 10"><path d="M0.6 0.6H11.2L7 5V9.2H4.8V5Z" fill="none" stroke="#666" stroke-width="0.9"/></svg>
<div class="a t" style="top:199.74px;font-size:8.1px;line-height:8.1px;color:#484644;font-family:'Liberation Sans',sans-serif;left:190.6px;">Sort</div>
<svg class="a" style="left:305px;top:199px" width="7" height="10" viewBox="0 0 7 10"><path d="M0.8 0.6L5.8 4.9L0.8 9.2" fill="none" stroke="#666" stroke-width="0.9"/></svg>
<div class="a t" style="top:219.24px;font-size:8.1px;line-height:8.1px;color:#484644;font-family:'Liberation Sans',sans-serif;left:190.6px;">Insert</div>
<svg class="a" style="left:305px;top:218.5px" width="7" height="10" viewBox="0 0 7 10"><path d="M0.8 0.6L5.8 4.9L0.8 9.2" fill="none" stroke="#666" stroke-width="0.9"/></svg>
<div class="a t" style="top:238.54px;font-size:8.1px;line-height:8.1px;color:#484644;font-family:'Liberation Sans',sans-serif;left:190.6px;">Pin Column</div>
<div class="a t" style="top:257.74px;font-size:8.1px;line-height:8.1px;color:#484644;font-family:'Liberation Sans',sans-serif;left:190.6px;">Column Display</div>
<svg class="a" style="left:305px;top:257px" width="7" height="10" viewBox="0 0 7 10"><path d="M0.8 0.6L5.8 4.9L0.8 9.2" fill="none" stroke="#666" stroke-width="0.9"/></svg>
<div class="a t" style="top:277.14px;font-size:8.1px;line-height:8.1px;color:#484644;font-family:'Liberation Sans',sans-serif;left:190.6px;">Aggregation</div>
<svg class="a" style="left:305px;top:276.4px" width="7" height="10" viewBox="0 0 7 10"><path d="M0.8 0.6L5.8 4.9L0.8 9.2" fill="none" stroke="#666" stroke-width="0.9"/></svg>
<div class="a t" style="top:296.34px;font-size:8.1px;line-height:8.1px;color:#484644;font-family:'Liberation Sans',sans-serif;left:190.6px;">Actions</div>
<svg class="a" style="left:305px;top:295.6px" width="7" height="10" viewBox="0 0 7 10"><path d="M0.8 0.6L5.8 4.9L0.8 9.2" fill="none" stroke="#666" stroke-width="0.9"/></svg>
<div class="a t" style="top:315.94px;font-size:8.1px;line-height:8.1px;color:#484644;font-family:'Liberation Sans',sans-serif;left:190.6px;">Select Header</div>
<div class="a t" style="top:335.74px;font-size:8.1px;line-height:8.1px;color:#484644;font-family:'Liberation Sans',sans-serif;left:190.6px;">Number Formatting</div>
<svg class="a" style="left:305px;top:335px" width="7" height="10" viewBox="0 0 7 10"><path d="M0.8 0.6L5.8 4.9L0.8 9.2" fill="none" stroke="#666" stroke-width="0.9"/></svg>
<div class="a t" style="top:356.74px;font-size:8.1px;line-height:8.1px;color:#484644;font-family:'Liberation Sans',sans-serif;left:190.6px;">Show (-ve) Sign</div>
<svg class="a" style="left:172px;top:198px" width="10" height="12" viewBox="0 0 10 12">
 <path d="M2.5 11V1M0.8 2.8L2.5 0.8L4.2 2.8" fill="none" stroke="#555" stroke-width="0.9"/>
 <path d="M7.8 0.8V10.8M6.1 9L7.8 11L9.5 9" fill="none" stroke="#2e72c4" stroke-width="0.9"/>
</svg>
<svg class="a" style="left:172px;top:216.5px" width="12" height="12" viewBox="0 0 12 12">
 <path d="M0.5 6H11.3M5.9 0.6V11.4" stroke="#3a78c8" stroke-width="0.9"/>
</svg>
<svg class="a" style="left:170.5px;top:235.5px" width="14" height="14" viewBox="0 0 14 14">
 <g transform="translate(10.9 2.4) rotate(45) scale(1.1)">
  <path d="M-2.2 0H2.2V3.8L4.6 7.2H-4.6L-2.2 3.8Z" fill="none" stroke="#3a78c8" stroke-width="0.85" stroke-linejoin="round"/>
  <path d="M0 7.2V12.6" stroke="#3a78c8" stroke-width="0.85"/>
 </g>
</svg>
<svg class="a" style="left:169.5px;top:252.5px" width="16" height="16" viewBox="0 0 16 16">
 <path d="M1 11.5V1H15V11.5H12.5" fill="none" stroke="#555" stroke-width="0.9"/>
 <path d="M1 11.5H4.5" stroke="#555" stroke-width="0.9"/>
 <rect x="5.2" y="4.2" width="7" height="11.2" rx="0.8" fill="#a8a8a8" stroke="#707070" stroke-width="0.7"/>
 <rect x="6.2" y="5.2" width="5" height="2.2" fill="#3a86dc"/>
 <path d="M5.8 9.3H11.6M5.8 11.5H11.6M5.8 13.6H11.6M7.9 8V15M9.6 8V15" stroke="#e6e6e6" stroke-width="0.6"/>
</svg>
<svg class="a" style="left:172px;top:272.5px" width="11" height="16" viewBox="0 0 11 16">
 <circle cx="6" cy="3.3" r="1.8" fill="none" stroke="#3a78c8" stroke-width="1"/>
 <path d="M1.2 6.6L4.9 10.4L1.2 14.3H9.6V13" fill="none" stroke="#444" stroke-width="0.95" stroke-linejoin="round"/>
 <circle cx="9.4" cy="6.8" r="0.55" fill="#555"/>
</svg>
<svg class="a" style="left:170.5px;top:293px" width="14" height="13" viewBox="0 0 14 13">
 <path d="M0.5 2.2H13.5M0.5 6.5H13.5M0.5 10.8H13.5" stroke="#555" stroke-width="0.8"/>
 <circle cx="8.5" cy="2.2" r="1.7" fill="#fff" stroke="#3a78c8" stroke-width="0.9"/>
 <circle cx="4" cy="6.5" r="1.7" fill="#fff" stroke="#3a78c8" stroke-width="0.9"/>
 <circle cx="8.8" cy="10.8" r="1.7" fill="#fff" stroke="#3a78c8" stroke-width="0.9"/>
</svg>
<svg class="a" style="left:170.5px;top:313px" width="14" height="12" viewBox="0 0 14 12">
 <rect x="0.8" y="0.8" width="12.6" height="10.6" fill="#fff" stroke="#555" stroke-width="0.9"/>
 <rect x="1.2" y="1.2" width="5.6" height="4.6" fill="#3a78c8"/>
 <rect x="7.4" y="1.2" width="5.6" height="4.6" fill="#3a78c8"/>
 <path d="M0.8 6H13.4M7.1 0.8V6" stroke="#555" stroke-width="0.9"/>
</svg>
<div class="a t" style="top:333.07px;font-size:9.6px;line-height:9.6px;color:#3b3a39;font-family:'Liberation Sans',sans-serif;left:170.5px;-webkit-text-stroke:0.3px #3b3a39;letter-spacing:0.3px">1.2</div>
<div class="a" style="left:170.5px;top:342.6px;width:14px;height:1px;background:#3a78c8"></div>
<div class="a t" style="top:357.78px;font-size:9.0px;line-height:9.0px;color:#3b3a39;font-family:'Liberation Sans',sans-serif;left:168.3px;-webkit-text-stroke:0.25px #3b3a39">(1.2)</div>
<div class="a" style="left:170.2px;top:356.5px;width:1px;height:1px;background:#3a78c8"></div>
<div class="a" style="left:175.5px;top:366.3px;width:1.5px;height:0.8px;background:#3a78c8"></div>
<div class="a" style="left:287px;top:354.5px;width:26px;height:14.5px;border:1px solid #4a4a4a;border-radius:8px;background:#fff"></div>
<div class="a" style="left:290px;top:357px;width:10px;height:10px;border-radius:50%;background:#252525"></div>
<div class="a" style="left:167.5px;top:214.8px;width:47.5px;height:17.8px;border:1.6px solid #dc3b3b;border-radius:3px"></div>
<div class="a" style="left:323.3px;top:214px;width:105.4px;height:59.3px;background:#fff;box-shadow:0 1px 4px rgba(0,0,0,0.22),0 0 1px rgba(0,0,0,0.2)"></div>
<div class="a t" style="top:221.49px;font-size:8.4px;line-height:8.4px;color:#484644;font-family:'Liberation Sans',sans-serif;left:352px;"><span style="display:inline-block;transform:scaleX(0.942);transform-origin:left">Copy as data Input</span></div>
<div class="a t" style="top:240.29px;font-size:8.4px;line-height:8.4px;color:#484644;font-family:'Liberation Sans',sans-serif;left:352px;"><span style="display:inline-block;transform:scaleX(0.942);transform-origin:left">New data Input</span></div>
<div class="a t" style="top:259.79px;font-size:8.4px;line-height:8.4px;color:#484644;font-family:'Liberation Sans',sans-serif;left:352px;"><span style="display:inline-block;transform:scaleX(0.942);transform-origin:left">Insert Formula</span></div>
<svg class="a" style="left:331px;top:216px" width="17" height="17" viewBox="0 0 17 17">
 <path d="M8.4 12.2H2.3Q1.5 12.2 1.5 11.4V2.3Q1.5 1.5 2.3 1.5H14.7Q15.5 1.5 15.5 2.3V11.4Q15.5 12.2 14.7 12.2H11.6" fill="none" stroke="#5a5a5a" stroke-width="1"/>
 <path d="M10 8.3V15M8.3 8.3H11.7M8.3 15H11.7" stroke="#4a86d6" stroke-width="1.2" fill="none"/>
</svg>
<svg class="a" style="left:331px;top:235.6px" width="17" height="17" viewBox="0 0 17 17">
 <path d="M8.4 12.2H2.3Q1.5 12.2 1.5 11.4V2.3Q1.5 1.5 2.3 1.5H14.7Q15.5 1.5 15.5 2.3V11.4Q15.5 12.2 14.7 12.2H11.6" fill="none" stroke="#5a5a5a" stroke-width="1"/>
 <path d="M10 8.3V15M8.3 8.3H11.7M8.3 15H11.7" stroke="#4a86d6" stroke-width="1.2" fill="none"/>
</svg>
<svg class="a" style="left:331px;top:255.1px" width="17" height="17" viewBox="0 0 17 17">
 <path d="M5.6 11.6H2.3Q1.5 11.6 1.5 10.8V2.3Q1.5 1.5 2.3 1.5H14.7Q15.5 1.5 15.5 2.3V10.8Q15.5 11.6 14.7 11.6H13.6" fill="none" stroke="#5a5a5a" stroke-width="1"/>
 <rect x="6.1" y="4.5" width="6.9" height="10.6" rx="0.8" fill="#a8a8a8" stroke="#707070" stroke-width="0.7"/>
 <rect x="7.1" y="5.5" width="4.9" height="2.2" fill="#3a86dc"/>
 <path d="M6.7 9.5H12.4M6.7 11.6H12.4M6.7 13.6H12.4M8.7 8.2V15M10.4 8.2V15" stroke="#e6e6e6" stroke-width="0.6"/>
</svg>
<div class="a" style="left:325px;top:212px;width:98px;height:21.5px;border:1.6px solid #dc3b3b;border-radius:3px"></div>
<div class="a" style="left:52px;top:529.8px;width:970.5px;height:20.6px;background:#f4f4f4"></div>
<div class="a" style="left:1px;top:550.2px;width:1021px;height:1px;background:#e3e3e3"></div>
<div class="a" style="left:1px;top:551.2px;width:1021.5px;height:22px;background:#f4f4f4"></div>
<div class="a" style="left:15.6px;top:529.8px;width:36.6px;height:20px;background:#fff"></div>
<div class="a" style="left:15.6px;top:548.6px;width:36.6px;height:2px;background:#2a7bd5"></div>
<div class="a" style="left:75.5px;top:534px;width:1px;height:12px;background:#e6e6e6"></div>
<div class="a" style="left:1px;top:526.5px;width:11.5px;height:16.5px;background:#f4f4f4;box-shadow:0 1px 2px rgba(0,0,0,0.2)"></div>
<svg class="a" style="left:4.5px;top:530.5px" width="5" height="7" viewBox="0 0 5 7"><g fill="#555"><rect x="0" y="0" width="1.2" height="1.2"/><rect x="2.8" y="0" width="1.2" height="1.2"/><rect x="0" y="2.6" width="1.2" height="1.2"/><rect x="2.8" y="2.6" width="1.2" height="1.2"/><rect x="0" y="5.2" width="1.2" height="1.2"/><rect x="2.8" y="5.2" width="1.2" height="1.2"/></g></svg>
<svg class="a" style="left:24.5px;top:530.5px" width="16" height="16" viewBox="0 0 16 16">
 <rect x="4.5" y="0.8" width="10.2" height="10.2" rx="0.8" fill="#fff" stroke="#555" stroke-width="0.9"/>
 <rect x="0.8" y="4.8" width="10.2" height="10.2" rx="0.8" fill="#fff" stroke="#555" stroke-width="0.9"/>
 <rect x="2.6" y="11.6" width="6.2" height="1.6" fill="#6b9bd8"/>
</svg>
<svg class="a" style="left:59.5px;top:535px" width="10" height="10" viewBox="0 0 10 10"><path d="M0 5H10M5 0V10" stroke="#666" stroke-width="0.8"/></svg>
<div class="a t" style="top:557.73px;font-size:9.3px;line-height:9.3px;color:#3b3a39;font-family:'Liberation Sans',sans-serif;left:2px;">Total rows: 8</div>
<div class="a t" style="top:557.27px;font-size:9.6px;line-height:9.6px;color:#3b3a39;font-family:'Liberation Sans',sans-serif;left:447px;"><span style="display:inline-block;transform:scaleX(0.955);transform-origin:left">Rows per page:</span></div>
<div class="a" style="left:515.5px;top:554.5px;width:41.5px;height:15.8px;background:#fff;border:1px solid #e6e6e6"></div>
<div class="a t" style="top:558.30px;font-size:9.8px;line-height:9.8px;color:#3b3a39;font-family:'Liberation Sans',sans-serif;left:524.4px;">All</div>
<svg class="a" style="left:539px;top:559.5px" width="11" height="6" viewBox="0 0 11 6"><path d="M0.5 0.5L5.5 5.2L10.5 0.5" fill="none" stroke="#555" stroke-width="0.9"/></svg>
<svg class="a" style="left:906px;top:555.2px" width="14" height="14" viewBox="0 0 14 14">
 <path d="M11.72 5.69L13.30 5.87L13.30 8.13L11.72 8.31L11.27 9.41L12.25 10.66L10.66 12.25L9.41 11.27L8.31 11.72L8.13 13.30L5.87 13.30L5.69 11.72L4.59 11.27L3.34 12.25L1.75 10.66L2.73 9.41L2.28 8.31L0.70 8.13L0.70 5.87L2.28 5.69L2.73 4.59L1.75 3.34L3.34 1.75L4.59 2.73L5.69 2.28L5.87 0.70L8.13 0.70L8.31 2.28L9.41 2.73L10.66 1.75L12.25 3.34L11.27 4.59Z" fill="none" stroke="#4a4a4a" stroke-width="1.05" stroke-linejoin="round"/>
 <circle cx="7" cy="7" r="2.7" fill="none" stroke="#3a78c8" stroke-width="1.2"/>
</svg>
<div class="a" style="left:928.2px;top:562.3px;width:8.4px;height:1px;background:#555"></div>
<div class="a" style="left:943px;top:555.5px;width:44px;height:15.7px;background:#fff;border:1px solid #e2e2e2"></div>
<div class="a t" style="top:559.43px;font-size:10px;line-height:10px;color:#3b3a39;font-family:'Liberation Sans',sans-serif;left:953.5px;letter-spacing:-0.3px">100<span style="letter-spacing:0">%</span></div>
<svg class="a" style="left:991.5px;top:558px" width="9" height="9" viewBox="0 0 9 9"><path d="M0 4.6H9M4.5 0V9" stroke="#555" stroke-width="1"/></svg>
<div class="a" style="left:1008.3px;top:555.2px;width:3.5px;height:3px;background:#cfcfcf"></div>
<div class="a" style="left:1008.3px;top:560.2px;width:3.5px;height:3px;background:#cfcfcf"></div>
<div class="a" style="left:1008.3px;top:565px;width:3.5px;height:3.8px;background:#e8262b"></div>
<div class="a" style="left:1013.8px;top:555.2px;width:3.2px;height:3px;background:#cfcfcf"></div>
<div class="a" style="left:1013.8px;top:559.9px;width:3.3px;height:8.9px;background:#f5a50b"></div>
<div class="a" style="left:1019px;top:554.1px;width:3.9px;height:14.7px;background:#5fc34f"></div>
<div class="a" style="left:1023px;top:281px;width:1px;height:11px;background:#e2e2e2"></div>
</body></html>
